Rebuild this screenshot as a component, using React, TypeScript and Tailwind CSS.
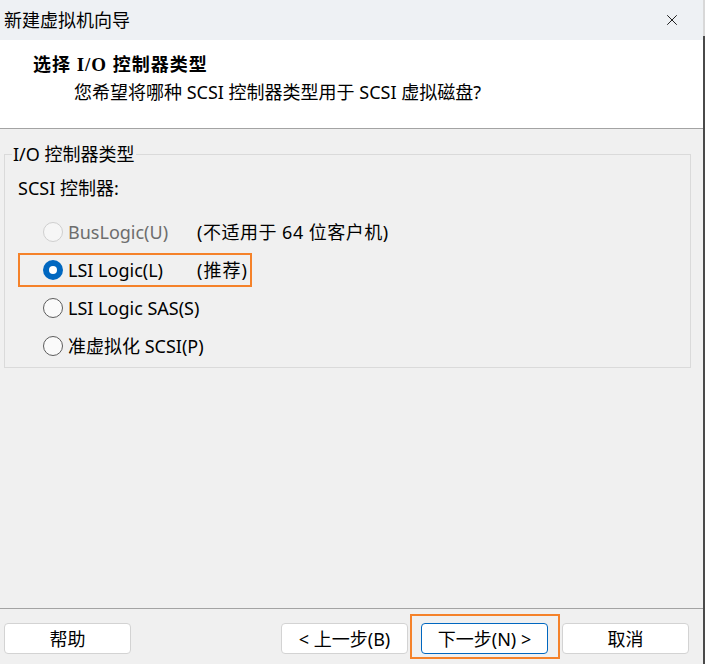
import { X } from "lucide-react";

const ui = "font-['Noto_Sans','Noto_Sans_CJK_SC',sans-serif]";

function Radio({ checked, disabled }: { checked?: boolean; disabled?: boolean }) {
    if (checked) {
        return (
            <span className="w-[20px] h-[20px] rounded-full bg-[#0067c0] flex items-center justify-center shrink-0">
                <span className="w-[8px] h-[8px] rounded-full bg-white"></span>
            </span>
        );
    }
    return (
        <span
            className={
                disabled
                    ? "w-[20px] h-[20px] rounded-full border border-[#cfcfcf] bg-[#f6f6f6] shrink-0"
                    : "w-[20px] h-[20px] rounded-full border border-[#5c5c5c] bg-[#fafafa] shrink-0"
            }
        ></span>
    );
}

function Btn({ label, primary }: { label: string; primary?: boolean }) {
    return (
        <button
            className={
                primary
                    ? "w-[127px] h-[31px] rounded-[4px] bg-white border border-[#0067c0] text-[18px] text-black leading-none"
                    : "w-[127px] h-[31px] rounded-[4px] bg-white border border-[#d3d3d3] text-[18px] text-black leading-none"
            }
        >
            {label}
        </button>
    );
}

export default function App() {
    return (
        <div className={`w-[705px] h-[664px] flex bg-[#f0f0f0] text-black overflow-hidden ${ui}`}>
            <div className="w-[703px] h-full flex flex-col">

                {/* TITLE BAR */}
                <div className="h-[40px] bg-[#eef1f4] flex items-center justify-between pl-[4px] pr-[22px]">
                    <span className="text-[18px] leading-none">新建虚拟机向导</span>
                    <X size={18} strokeWidth={1.3} className="text-[#1b1b1b]" />
                </div>

                {/* HEADER */}
                <div className="h-[89px] bg-white border-b border-[#a3a3a3] pt-[12px] pl-[33px]">
                    <div className="text-[18px] font-bold leading-[24px] tracking-[1px]">
                        选择 <span className="font-['Liberation_Serif',serif] text-[19px]">I/O</span> 控制器类型
                    </div>
                    <div className="text-[18px] leading-[24px] pl-[41px] mt-[3px]">
                        您希望将哪种 SCSI 控制器类型用于 SCSI 虚拟磁盘?
                    </div>
                </div>

                {/* BODY */}
                <div className="flex-1 pt-[13px]">
                    <fieldset className="ml-[4px] w-[687px] h-[226px] border border-[#dadada] px-0">
                        <legend className="ml-[7px] px-[1px] text-[18px] leading-[24px]">I/O 控制器类型</legend>

                        <div className="pl-[13px] mt-[10px] text-[18px] leading-[24px]">SCSI 控制器:</div>

                        <div className="mt-[13px] flex flex-col text-[18px]">
                            <div className="h-[38px] flex items-center pl-[38px]">
                                <Radio disabled />
                                <span className="ml-[5px] w-[129px] text-[#6d6d6d]">BusLogic(U)</span>
                                <span className="tracking-[0.5px]">(不适用于 64 位客户机)</span>
                            </div>

                            <div className="h-[38px] flex items-center pl-[13px]">
                                <div className="w-[234px] h-[34px] border-2 border-[#f5822a] flex items-center pl-[23px]">
                                    <Radio checked />
                                    <span className="ml-[5px] w-[129px]">LSI Logic(L)</span>
                                    <span className="tracking-[1px]">(推荐)</span>
                                </div>
                            </div>

                            <div className="h-[38px] flex items-center pl-[38px]">
                                <Radio />
                                <span className="ml-[5px]">LSI Logic SAS(S)</span>
                            </div>

                            <div className="h-[38px] flex items-center pl-[38px]">
                                <Radio />
                                <span className="ml-[5px]">准虚拟化 SCSI(P)</span>
                            </div>
                        </div>
                    </fieldset>
                </div>

                {/* FOOTER */}
                <div className="h-[56px] border-t border-[#a3a3a3] flex items-start pt-[14px] pl-[4px] pr-[14px]">
                    <Btn label="帮助" />
                    <div className="flex-1"></div>
                    <Btn label="< 上一步(B)" />
                    <div className="ml-[2px] -mt-[9px] border-2 border-[#f5822a] pt-[7px] pb-[3px] pl-[9px] pr-[10px]">
                        <Btn label="下一步(N) >" primary />
                    </div>
                    <div className="ml-[2px]">
                        <Btn label="取消" />
                    </div>
                </div>
            </div>

            {/* window edge */}
            <div className="w-[2px] h-full flex flex-col">
                <div className="h-[36px] bg-[#d8d8d8]"></div>
                <div className="flex-1 bg-[#4a4a4a]"></div>
            </div>
        </div>
    );
}
